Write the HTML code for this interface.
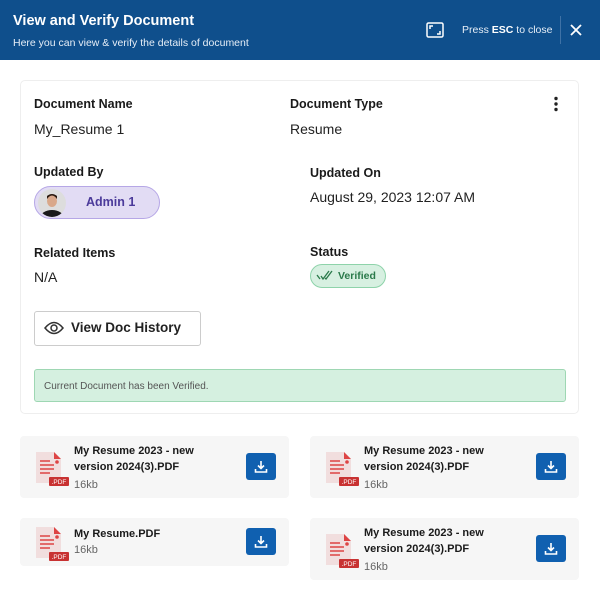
<!DOCTYPE html>
<html><head><meta charset="utf-8"><style>
*{margin:0;padding:0;box-sizing:border-box}
body{width:600px;height:600px;background:#fff;font-family:"Liberation Sans",sans-serif;position:relative;overflow:hidden;color:#1a1a1a}
.a{position:absolute}
.hdr{left:0;top:0;width:600px;height:60px;background:#0f4f8c;color:#fff}
.lbl{font-size:12.5px;font-weight:bold;color:#1a1a1a}
.val{font-size:14px;color:#222}
.file{background:#f6f6f6;border-radius:4px;width:269px}
.fn{font-size:11px;font-weight:bold;line-height:16px;color:#1a1a1a}
.fs{font-size:11px;color:#666}
.dl{width:30px;height:27px;background:#1060b0;border-radius:3px;display:flex;align-items:center;justify-content:center}
</style></head><body>
<div class="a hdr">
  <div class="a" style="left:13px;top:13px;font-size:14.5px;font-weight:bold">View and Verify Document</div>
  <div class="a" style="left:13px;top:37px;font-size:10.5px;color:#e6eef7">Here you can view &amp; verify the details of document</div>
  <svg class="a" style="left:426px;top:22px" width="18" height="16" viewBox="0 0 18 16"><rect x="1" y="1" width="16" height="14" rx="1.5" fill="none" stroke="#fff" stroke-width="1.5"/><path d="M4 7V4h3M14 9v3h-3" fill="none" stroke="#fff" stroke-width="1.5"/></svg>
  <div class="a" style="left:462px;top:24px;font-size:10.5px;color:#e6eef7">Press <b style="color:#fff">ESC</b> to close</div>
  <div class="a" style="left:560px;top:16px;width:1px;height:28px;background:#3f72a6"></div>
  <svg class="a" style="left:570px;top:24px" width="12" height="12" viewBox="0 0 12 12"><path d="M1 1L11 11M11 1L1 11" stroke="#fff" stroke-width="1.8"/></svg>
</div>

<div class="a" style="left:20px;top:80px;width:559px;height:334px;border:1px solid #eee;border-radius:5px"></div>
<div class="a lbl" style="left:34px;top:97px">Document Name</div>
<div class="a val" style="left:34px;top:121px">My_Resume 1</div>
<div class="a lbl" style="left:290px;top:97px">Document Type</div>
<div class="a val" style="left:290px;top:121px">Resume</div>
<svg class="a" style="left:553px;top:96px" width="6" height="16"><circle cx="3" cy="2.5" r="1.7" fill="#222"/><circle cx="3" cy="8" r="1.7" fill="#222"/><circle cx="3" cy="13.5" r="1.7" fill="#222"/></svg>

<div class="a lbl" style="left:34px;top:165px">Updated By</div>
<div class="a" style="left:34px;top:186px;width:126px;height:33px;background:#e2dcf4;border:1px solid #b6a7e6;border-radius:17px"></div>
<svg class="a" style="left:38px;top:189px" width="28" height="28" viewBox="0 0 28 28"><clipPath id="c"><circle cx="14" cy="14" r="14"/></clipPath><g clip-path="url(#c)"><rect width="28" height="28" fill="#ddd"/><ellipse cx="14" cy="29" rx="12" ry="8" fill="#1a1a1a"/><ellipse cx="14" cy="12" rx="5" ry="6" fill="#d9a88a"/><path d="M9 10q5-7 10 0v-3q-5-4-10 0z" fill="#2a1a10"/></g></svg>
<div class="a" style="left:86px;top:195px;font-size:12.5px;font-weight:bold;color:#4b3a9a">Admin 1</div>

<div class="a lbl" style="left:310px;top:166px">Updated On</div>
<div class="a val" style="left:310px;top:189px">August 29, 2023 12:07 AM</div>

<div class="a lbl" style="left:34px;top:246px">Related Items</div>
<div class="a val" style="left:34px;top:269px">N/A</div>
<div class="a lbl" style="left:310px;top:245px">Status</div>
<div class="a" style="left:310px;top:264px;width:76px;height:24px;background:#d7f0e1;border:1px solid #8ed3aa;border-radius:12px"></div>
<svg class="a" style="left:316px;top:270px" width="18" height="11" viewBox="0 0 18 11"><path d="M1 5l3 4M5 6l2 3 6-8M9 8l1 1 6-8" fill="none" stroke="#2a7a4a" stroke-width="1.3"/></svg>
<div class="a" style="left:338px;top:270px;font-size:10.5px;font-weight:bold;color:#2a7a4a">Verified</div>

<div class="a" style="left:34px;top:311px;width:167px;height:35px;border:1px solid #ccc;border-radius:3px"></div>
<svg class="a" style="left:44px;top:320px" width="20" height="16" viewBox="0 0 20 16"><path d="M1 8q9-11 18 0q-9 11-18 0z" fill="none" stroke="#333" stroke-width="1.5"/><circle cx="10" cy="8" r="3" fill="none" stroke="#333" stroke-width="1.5"/></svg>
<div class="a" style="left:71px;top:320px;font-size:13.5px;font-weight:bold;color:#222">View Doc History</div>

<div class="a" style="left:34px;top:369px;width:532px;height:33px;background:#d5f0e0;border:1px solid #9ed7b3;border-radius:3px"></div>
<div class="a" style="left:44px;top:381px;font-size:10px;color:#555">Current Document has been Verified.</div>

<div class="a file" style="left:20px;top:436px;height:62px"></div>
<div class="a file" style="left:310px;top:436px;height:62px"></div>
<div class="a file" style="left:20px;top:518px;height:48px"></div>
<div class="a file" style="left:310px;top:518px;height:62px"></div>

<svg style="display:none"><symbol id="pdf" viewBox="0 0 36 36"><path d="M2 2h18l7 7v24H2z" fill="#f1dede"/><path d="M20 2l7 7h-7z" fill="#d44"/><path d="M6 11h10M6 15h14M6 19h14M6 23h10" stroke="#d44" stroke-width="1.4"/><circle cx="23" cy="12" r="1.8" fill="#d44"/><rect x="15" y="27" width="20" height="9" rx="1" fill="#c83232"/><text x="25" y="34" font-family="Liberation Sans" font-size="6.5" fill="#fff" text-anchor="middle">.PDF</text></symbol></svg>

<svg class="a" style="left:34px;top:450px" width="36" height="36"><use href="#pdf"/></svg>
<div class="a fn" style="left:74px;top:443px">My Resume 2023 - new<br>version 2024(3).PDF</div>
<div class="a fs" style="left:74px;top:479px">16kb</div>
<div class="a dl" style="left:246px;top:453px"><svg width="14" height="14" viewBox="0 0 14 14"><path d="M7 1v7M4 5.5L7 8.5 10 5.5M1.5 9v3h11V9" fill="none" stroke="#fff" stroke-width="1.6"/></svg></div>

<svg class="a" style="left:324px;top:450px" width="36" height="36"><use href="#pdf"/></svg>
<div class="a fn" style="left:364px;top:443px">My Resume 2023 - new<br>version 2024(3).PDF</div>
<div class="a fs" style="left:364px;top:479px">16kb</div>
<div class="a dl" style="left:536px;top:453px"><svg width="14" height="14" viewBox="0 0 14 14"><path d="M7 1v7M4 5.5L7 8.5 10 5.5M1.5 9v3h11V9" fill="none" stroke="#fff" stroke-width="1.6"/></svg></div>

<svg class="a" style="left:34px;top:525px" width="36" height="36"><use href="#pdf"/></svg>
<div class="a fn" style="left:74px;top:526px">My Resume.PDF</div>
<div class="a fs" style="left:74px;top:544px">16kb</div>
<div class="a dl" style="left:246px;top:528px"><svg width="14" height="14" viewBox="0 0 14 14"><path d="M7 1v7M4 5.5L7 8.5 10 5.5M1.5 9v3h11V9" fill="none" stroke="#fff" stroke-width="1.6"/></svg></div>

<svg class="a" style="left:324px;top:532px" width="36" height="36"><use href="#pdf"/></svg>
<div class="a fn" style="left:364px;top:525px">My Resume 2023 - new<br>version 2024(3).PDF</div>
<div class="a fs" style="left:364px;top:561px">16kb</div>
<div class="a dl" style="left:536px;top:535px"><svg width="14" height="14" viewBox="0 0 14 14"><path d="M7 1v7M4 5.5L7 8.5 10 5.5M1.5 9v3h11V9" fill="none" stroke="#fff" stroke-width="1.6"/></svg></div>
</body></html>
